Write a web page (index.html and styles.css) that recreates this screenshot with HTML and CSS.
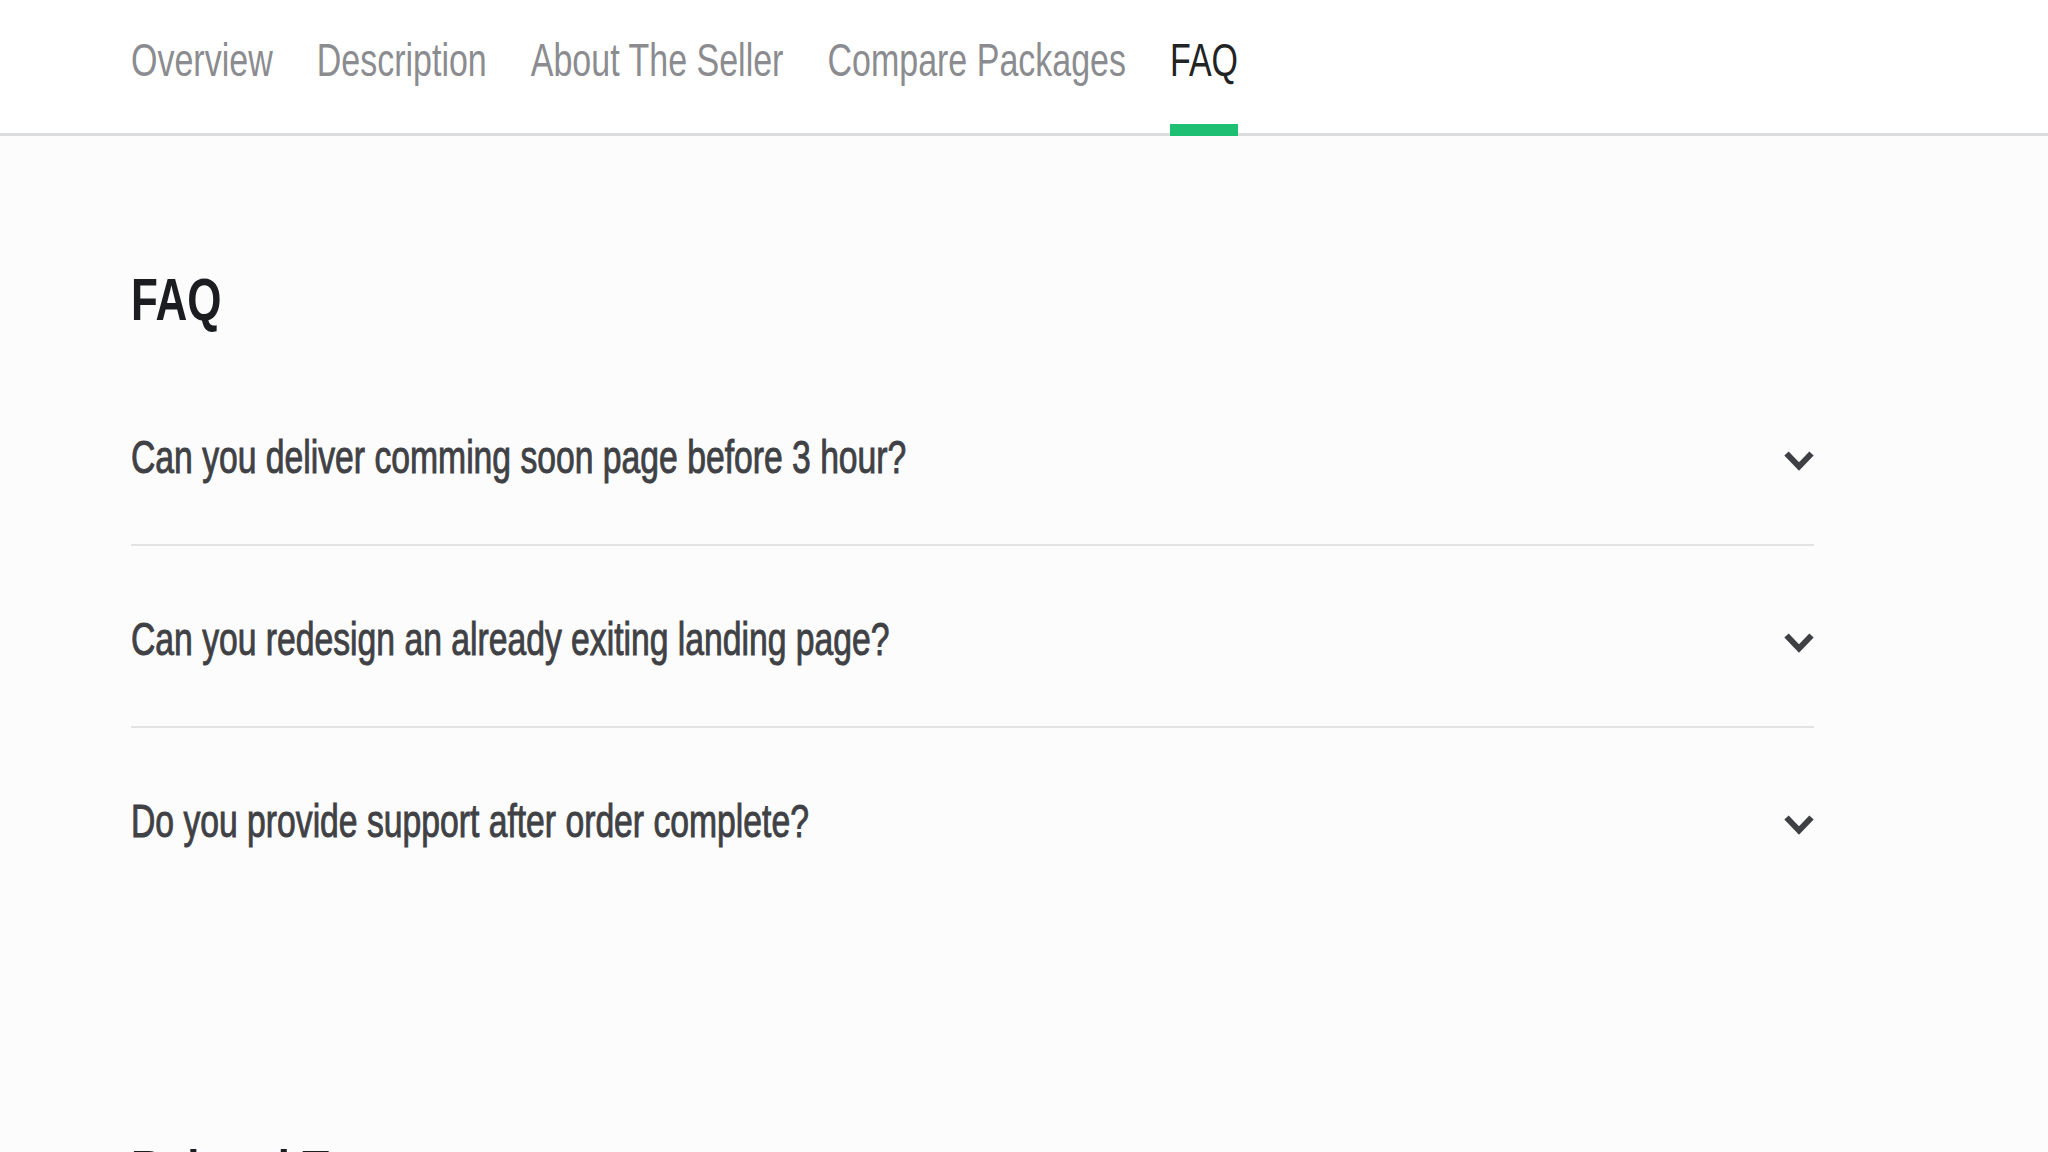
FILE: index.html
```html
<!DOCTYPE html>
<html lang="en">
<head>
<meta charset="utf-8">
<title>FAQ</title>
<link rel="stylesheet" href="styles.css">
</head>
<body>
<nav class="tabs">
  <ul class="tab-list">
    <li class="tab"><span class="tab-label">Overview</span><span class="tab-bar"></span></li>
    <li class="tab"><span class="tab-label">Description</span><span class="tab-bar"></span></li>
    <li class="tab"><span class="tab-label">About The Seller</span><span class="tab-bar"></span></li>
    <li class="tab"><span class="tab-label">Compare Packages</span><span class="tab-bar"></span></li>
    <li class="tab tab-active"><span class="tab-label">FAQ</span><span class="tab-bar"></span></li>
  </ul>
</nav>
<main class="main">
  <section class="faq">
    <h2 class="section-title">FAQ</h2>
    <div class="faq-list">
      <div class="faq-row">
        <span class="faq-question">Can you deliver comming soon page before 3 hour?</span>
        <svg class="chevron" width="32" height="24" viewBox="0 0 32 24"><path d="M3.5 4.5 L16 17.5 L28.5 4.5" fill="none" stroke="#3f4043" stroke-width="6" stroke-linecap="butt" stroke-linejoin="miter"/></svg>
      </div>
      <div class="faq-row">
        <span class="faq-question">Can you redesign an already exiting landing page?</span>
        <svg class="chevron" width="32" height="24" viewBox="0 0 32 24"><path d="M3.5 4.5 L16 17.5 L28.5 4.5" fill="none" stroke="#3f4043" stroke-width="6" stroke-linecap="butt" stroke-linejoin="miter"/></svg>
      </div>
      <div class="faq-row">
        <span class="faq-question">Do you provide support after order complete?</span>
        <svg class="chevron" width="32" height="24" viewBox="0 0 32 24"><path d="M3.5 4.5 L16 17.5 L28.5 4.5" fill="none" stroke="#3f4043" stroke-width="6" stroke-linecap="butt" stroke-linejoin="miter"/></svg>
      </div>
    </div>
  </section>
  <section class="related">
    <h2 class="section-title">Related Tags</h2>
  </section>
</main>
</body>
</html>
```

FILE: styles.css
```css
* {
  box-sizing: border-box;
}

html, body {
  margin: 0;
  padding: 0;
}

body {
  background: #fcfcfd;
  font-family: "Liberation Sans", Arial, sans-serif;
  overflow: hidden;
  height: 1152px;
}

.tabs {
  background: #ffffff;
  border-bottom: 3px solid #dcdddf;
  padding: 44px 0 0 131px;
}

.tab-list {
  list-style: none;
  margin: 0 0 -3px 0;
  padding: 0;
  display: flex;
  gap: 44px;
}

.tab {
  display: flex;
  flex-direction: column;
}

.tab-label {
  display: block;
  font-size: 34px;
  line-height: 40px;
  color: #8b8c90;
  white-space: nowrap;
  transform: scaleY(1.38);
  transform-origin: left 32px;
}

.tab-bar {
  display: block;
  height: 12px;
  margin-top: 40px;
  background: transparent;
}

.tab-active .tab-label {
  color: #222325;
}

.tab-active .tab-bar {
  background: #1dbf73;
}

.main {
  padding: 144px 0 0 131px;
}

.section-title {
  margin: 0;
  font-size: 44px;
  line-height: 50px;
  font-weight: 700;
  color: #1c1d20;
  transform: scaleY(1.36);
  transform-origin: left 40px;
}

.faq .section-title {
  margin-bottom: 34px;
}

.faq-list {
  width: 1683px;
}

.faq-row {
  display: flex;
  justify-content: space-between;
  align-items: center;
  padding: 77px 0 63px 0;
  border-bottom: 2px solid #e2e3e5;
}

.faq-row:last-child {
  border-bottom: none;
}

.faq-question {
  display: block;
  font-size: 33.7px;
  line-height: 40px;
  color: #404145;
  -webkit-text-stroke: 0.7px #404145;
  white-space: nowrap;
  transform: scaleY(1.38);
  transform-origin: left 32px;
}

.chevron {
  display: block;
  flex: none;
  margin-right: -1px;
}

.related {
  margin-top: 244px;
}
```
